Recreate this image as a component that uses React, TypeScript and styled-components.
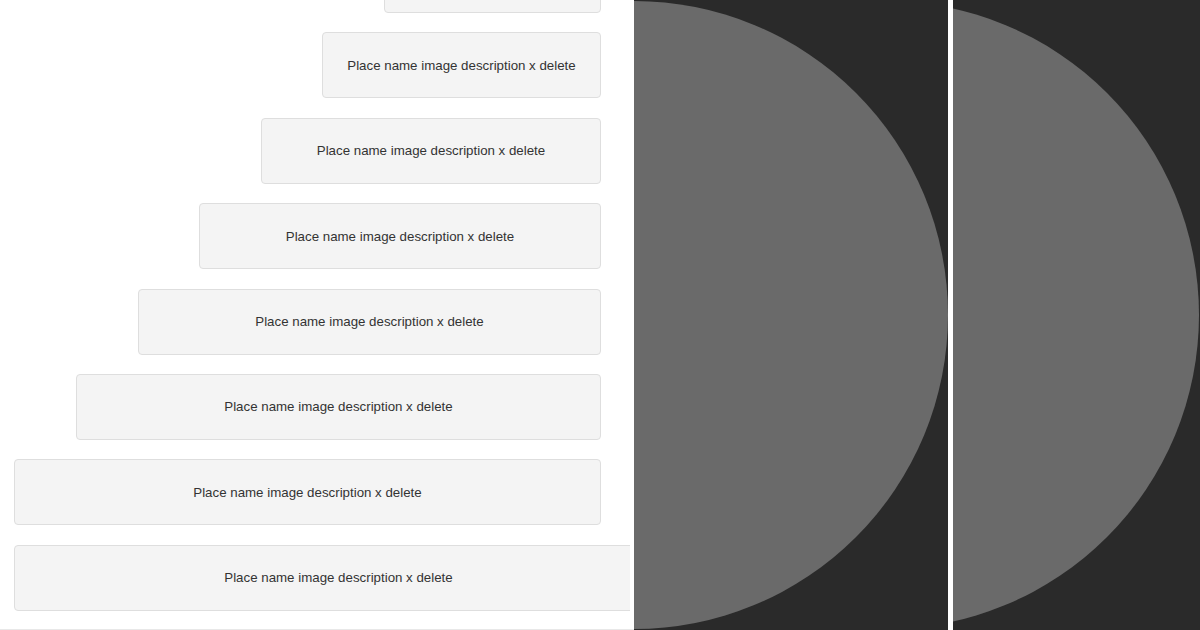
import React from 'react';
import styled, { createGlobalStyle } from 'styled-components';

const GlobalStyle = createGlobalStyle`
  html, body {
    margin: 0;
    padding: 0;
    background: #ffffff;
    overflow: hidden;
  }
  body {
    font-family: "Liberation Sans", Arial, sans-serif;
  }
`;

const Page = styled.div`
  display: flex;
  width: 1200px;
  height: 630px;
  overflow: hidden;
  background: #ffffff;
`;

const ListPanel = styled.div`
  flex: 0 0 634px;
  height: 630px;
  box-sizing: border-box;
  border-bottom: 1px solid #e8e8e8;
  overflow: hidden;
`;

// the list is clipped a few pixels before the panel edge
const CardColumn = styled.div`
  display: flex;
  flex-direction: column;
  align-items: flex-end;
  gap: 19.4px;
  width: 630px;
  box-sizing: border-box;
  margin-top: -53px;
  padding-right: 29px;
  overflow: hidden;
`;

const Card = styled.div<{ $width: number; $shift?: number }>`
  box-sizing: border-box;
  width: ${(p) => p.$width}px;
  height: 66px;
  margin-right: ${(p) => -(p.$shift || 0)}px;
  flex-shrink: 0;
  display: flex;
  align-items: center;
  justify-content: center;
  background: #f4f4f4;
  border: 1px solid #dedede;
  border-radius: 4px;
  color: #333333;
  font-size: 13.3px;
`;

const Stage = styled.div`
  display: flex;
  flex: 1;
  gap: 5px;
  height: 630px;
`;

const Slide = styled.div<{ $width: number }>`
  flex: 0 0 ${(p) => p.$width}px;
  height: 630px;
  background: #2a2a2a;
  overflow: hidden;

  svg {
    display: block;
  }
`;

const cards = [
  { width: 217 },
  { width: 279 },
  { width: 340 },
  { width: 402 },
  { width: 463 },
  { width: 525 },
  { width: 587 },
  { width: 649, shift: 62 },
];

const Disc: React.FC<{ width: number; cx: number }> = ({ width, cx }) => (
  <svg width={width} height={630} viewBox={`0 0 ${width} 630`}>
    <circle cx={cx} cy={315} r={314} fill="#6a6a6a" />
  </svg>
);

const App: React.FC = () => {
  return (
    <>
      <GlobalStyle />
      <Page>
        <ListPanel>
          <CardColumn>
            {cards.map((c, i) => (
              <Card key={i} $width={c.width} $shift={c.shift}>
                Place name image description x delete
              </Card>
            ))}
          </CardColumn>
        </ListPanel>
        <Stage>
          <Slide $width={314}>
            <Disc width={314} cx={0} />
          </Slide>
          <Slide $width={247}>
            <Disc width={247} cx={-68} />
          </Slide>
        </Stage>
      </Page>
    </>
  );
};

export default App;
